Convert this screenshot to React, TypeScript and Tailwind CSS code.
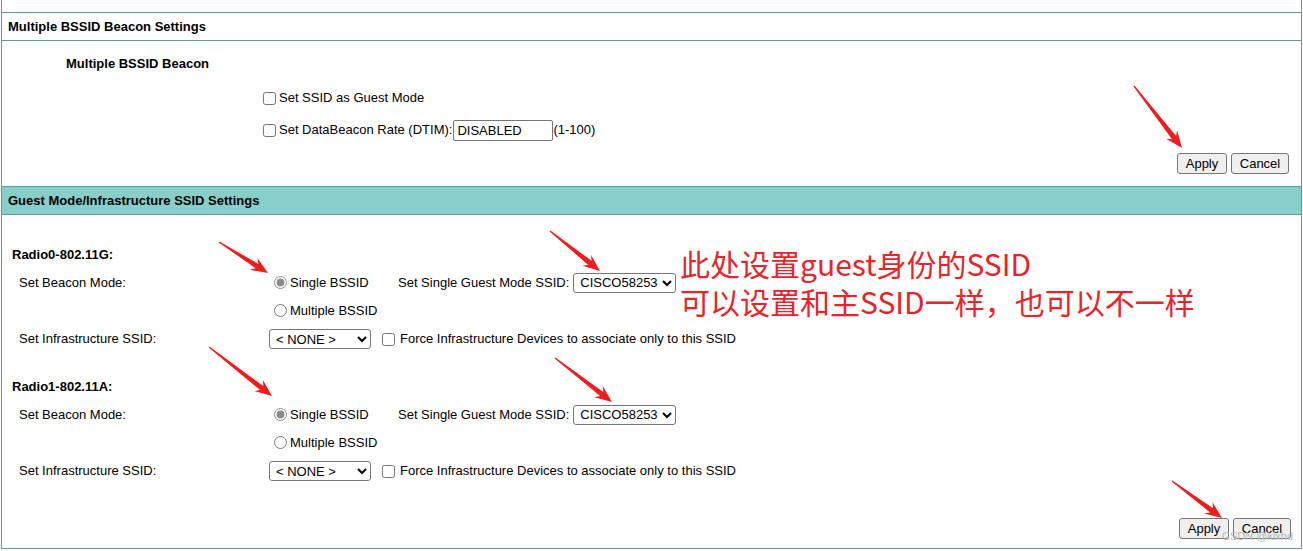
import React from 'react'

type Pt = [number, number]

// annotation arrow drawn as a tapered polygon from tail to tip
function Arrow({ from, to }: { from: Pt; to: Pt }) {
  const [x1, y1] = from
  const [x2, y2] = to
  const len = Math.hypot(x2 - x1, y2 - y1)
  const ux = (x2 - x1) / len
  const uy = (y2 - y1) / len
  const nx = -uy
  const ny = ux
  const headLen = 17
  const neck = len - headLen + 4
  const base = len - headLen
  const p = (t: number, w: number): string =>
    `${(x1 + ux * t + nx * w).toFixed(1)},${(y1 + uy * t + ny * w).toFixed(1)}`
  const pts = [
    p(0, 0.6),
    p(neck, 2.6),
    p(base, 7),
    p(len, 0),
    p(base, -7),
    p(neck, -2.6),
    p(0, -0.6),
  ].join(' ')
  return <polygon points={pts} fill="#ee1c1c" />
}

function Btn({ children, w }: { children: React.ReactNode; w: string }) {
  return (
    <button
      className={`h-[21px] ${w} rounded-[3px] border border-[#767676] bg-[#efefef] text-[13px] leading-none text-black`}
    >
      {children}
    </button>
  )
}

function Radio({ checked, label }: { checked?: boolean; label: string }) {
  return (
    <label className="flex items-center">
      <input
        type="radio"
        defaultChecked={checked}
        className="ml-[5px] mr-[3px] h-[13px] w-[13px] accent-[#8c8c8c]"
      />
      <span>{label}</span>
    </label>
  )
}

function RadioBlock({ title, first }: { title: string; first?: boolean }) {
  return (
    <div className={first ? '' : 'mt-[20px]'}>
      <div className="flex h-[28px] items-center pl-[10px] font-bold">{title}</div>
      <div className="flex h-[27px] items-center">
        <div className="w-[267px] pl-[17px]">Set Beacon Mode:</div>
        <div className="w-[129px]">
          <Radio checked label="Single BSSID" />
        </div>
        <span className="mr-[4px]">Set Single Guest Mode SSID:</span>
        <select className="h-[20px] w-[103px] rounded-[3px] border border-[#767676] bg-white pl-[2px] text-[13px]">
          <option>CISCO58253</option>
        </select>
      </div>
      <div className="flex h-[29px] items-center">
        <div className="w-[267px]" />
        <Radio label="Multiple BSSID" />
      </div>
      <div className="flex h-[28px] items-center">
        <div className="w-[267px] pl-[17px]">Set Infrastructure SSID:</div>
        <select className="h-[20px] w-[102px] rounded-[3px] border border-[#767676] bg-white pl-[2px] text-[13px]">
          <option>&lt; NONE &gt;</option>
        </select>
        <input type="checkbox" className="ml-[11px] mr-[5px] h-[13px] w-[13px]" />
        <span>Force Infrastructure Devices to associate only to this SSID</span>
      </div>
    </div>
  )
}

export default function App() {
  return (
    <div
      className="relative h-[551px] w-[1303px] overflow-hidden bg-white pl-[1px] text-[13px] leading-[16px] text-black"
      style={{ fontFamily: '"Liberation Sans", Arial, sans-serif' }}
    >
      <div className="w-[1301px] border-x border-b border-[#5f9c9c]">
        <div className="h-[13px] border-b border-[#5f9c9c]" />
        <div className="flex h-[28px] items-center border-b border-[#5f9c9c] pl-[6px] font-bold">
          Multiple BSSID Beacon Settings
        </div>

        <div className="border-b border-[#5f9c9c] pb-[12px] pt-[13px]">
          <div className="flex h-[20px] items-center pl-[64px] font-bold">Multiple BSSID Beacon</div>
          <div className="mt-[13px] flex h-[22px] items-center pl-[261px]">
            <input type="checkbox" className="mr-[3px] h-[13px] w-[13px]" />
            <span>Set SSID as Guest Mode</span>
          </div>
          <div className="mt-[10px] flex h-[22px] items-center pl-[261px]">
            <input type="checkbox" className="mr-[3px] h-[13px] w-[13px]" />
            <span>Set DataBeacon Rate (DTIM):</span>
            <input
              type="text"
              defaultValue="DISABLED"
              className="ml-[1px] h-[21px] w-[100px] rounded-[2px] border border-[#767676] px-[3px] text-[13px]"
            />
            <span>(1-100)</span>
          </div>
          <div className="mt-[12px] flex justify-end gap-[4px] pr-[12px]">
            <Btn w="w-[50px]">Apply</Btn>
            <Btn w="w-[58px]">Cancel</Btn>
          </div>
        </div>

        <div className="flex h-[28px] items-center border-b border-[#5f9c9c] bg-[#89cfc9] pl-[6px] font-bold">
          Guest Mode/Infrastructure SSID Settings
        </div>

        <div className="pb-[9px] pt-[26px]">
          <RadioBlock first title="Radio0-802.11G:" />
          <RadioBlock title="Radio1-802.11A:" />
          <div className="mt-[33px] flex justify-end gap-[4px] pr-[10px]">
            <Btn w="w-[50px]">Apply</Btn>
            <Btn w="w-[58px]">Cancel</Btn>
          </div>
        </div>
      </div>

      <div
        className="pointer-events-none absolute left-[680px] top-[244px] text-[30px] leading-[38px] text-[#e8232a]"
        style={{ fontFamily: '"Noto Sans CJK SC", "Liberation Sans", sans-serif' }}
      >
        <div>此处设置guest身份的SSID</div>
        <div>可以设置和主SSID一样，也可以不一样</div>
      </div>

      <div className="pointer-events-none absolute left-[1222px] top-[530px] text-[11px] leading-[12px] text-[#b8b8b8]">
        CSDN @klxhd
      </div>

      <svg className="pointer-events-none absolute left-0 top-0" width="1303" height="551">
        <Arrow from={[1134, 86]} to={[1182, 148]} />
        <Arrow from={[219, 242]} to={[268, 273]} />
        <Arrow from={[550, 231]} to={[600, 271]} />
        <Arrow from={[209, 347]} to={[272, 396]} />
        <Arrow from={[555, 358]} to={[612, 402]} />
        <Arrow from={[1172, 481]} to={[1222, 518]} />
      </svg>
    </div>
  )
}
